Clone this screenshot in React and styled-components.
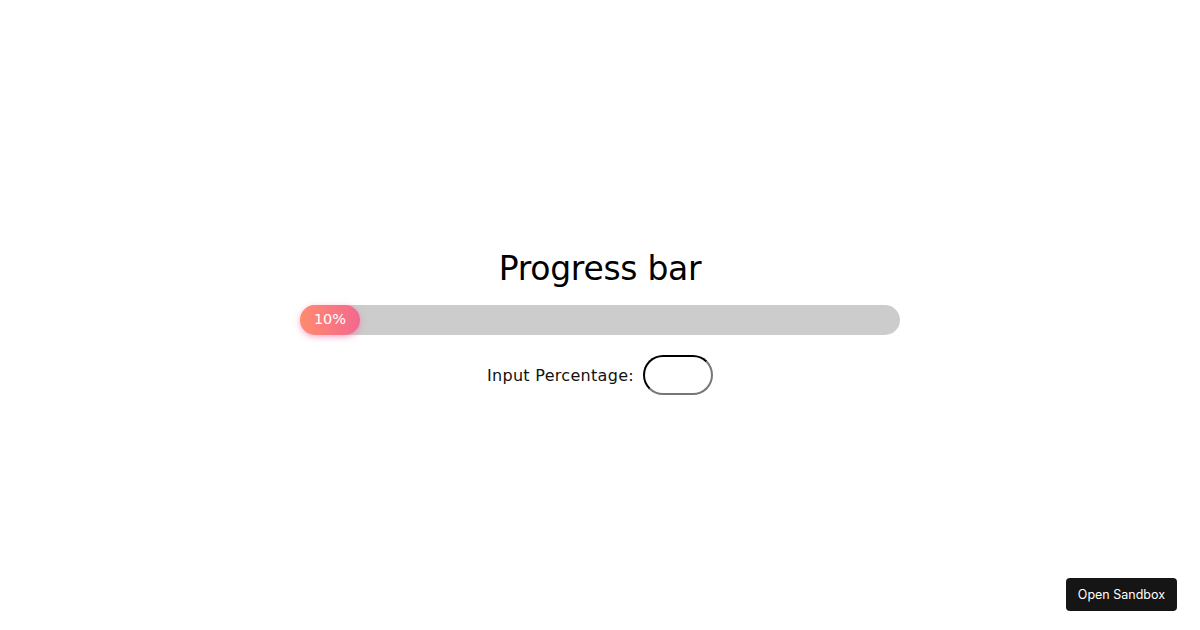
import React from "react"
import styled, { createGlobalStyle } from "styled-components"

const GlobalStyle = createGlobalStyle`
  html, body {
    margin: 0;
    padding: 0;
    background: #fff;
  }
  body {
    font-family: "DejaVu Sans", "Noto Sans", sans-serif;
  }
`

const Page = styled.div`
  height: 630px;
  display: flex;
  flex-direction: column;
  align-items: center;
  padding-top: 247px;
  box-sizing: border-box;
  position: relative;
`

const Title = styled.h1`
  margin: 0 0 14px;
  font-size: 33px;
  font-weight: 500;
  letter-spacing: -0.3px;
  color: #000;
  line-height: 44px;
`

const Track = styled.div`
  width: 600px;
  height: 30px;
  border-radius: 15px;
  background: #cccccc;
  display: flex;
`

const Fill = styled.div`
  height: 30px;
  border-radius: 15px;
  background: linear-gradient(90deg, #ff8b6e 0%, #f3688f 100%);
  box-shadow: 0 2px 6px rgba(240, 100, 160, 0.55);
  display: flex;
  align-items: center;
  justify-content: center;
  color: #fff;
  font-size: 14.5px;
  padding-bottom: 2px;
  box-sizing: border-box;
`

const Row = styled.div`
  margin-top: 20px;
  display: flex;
  align-items: center;
  gap: 9px;
  font-size: 16px;
  letter-spacing: 0.3px;
  color: #111;
`

const Input = styled.input`
  width: 70px;
  height: 40px;
  box-sizing: border-box;
  border-radius: 20px;
  border: 2px inset #767676;
  border-top-color: #111;
  border-left-color: #111;
  outline: none;
  padding: 0 10px;
  font-size: 14px;
`

const SandboxButton = styled.button`
  position: absolute;
  right: 23px;
  bottom: 19px;
  height: 33px;
  padding: 0 12px;
  border: none;
  border-radius: 4px;
  background: #151515;
  color: #fff;
  font-family: Inter, "Liberation Sans", sans-serif;
  font-size: 12.5px;
`

const ProgressBar = ({ value }) => (
  <Track>
    <Fill style={{ width: `${value}%` }}>{value}%</Fill>
  </Track>
)

const App = () => (
  <Page>
    <GlobalStyle />
    <Title>Progress bar</Title>
    <ProgressBar value={10} />
    <Row>
      <span>Input Percentage:</span>
      <Input type="text" />
    </Row>
    <SandboxButton>Open Sandbox</SandboxButton>
  </Page>
)

export default App
